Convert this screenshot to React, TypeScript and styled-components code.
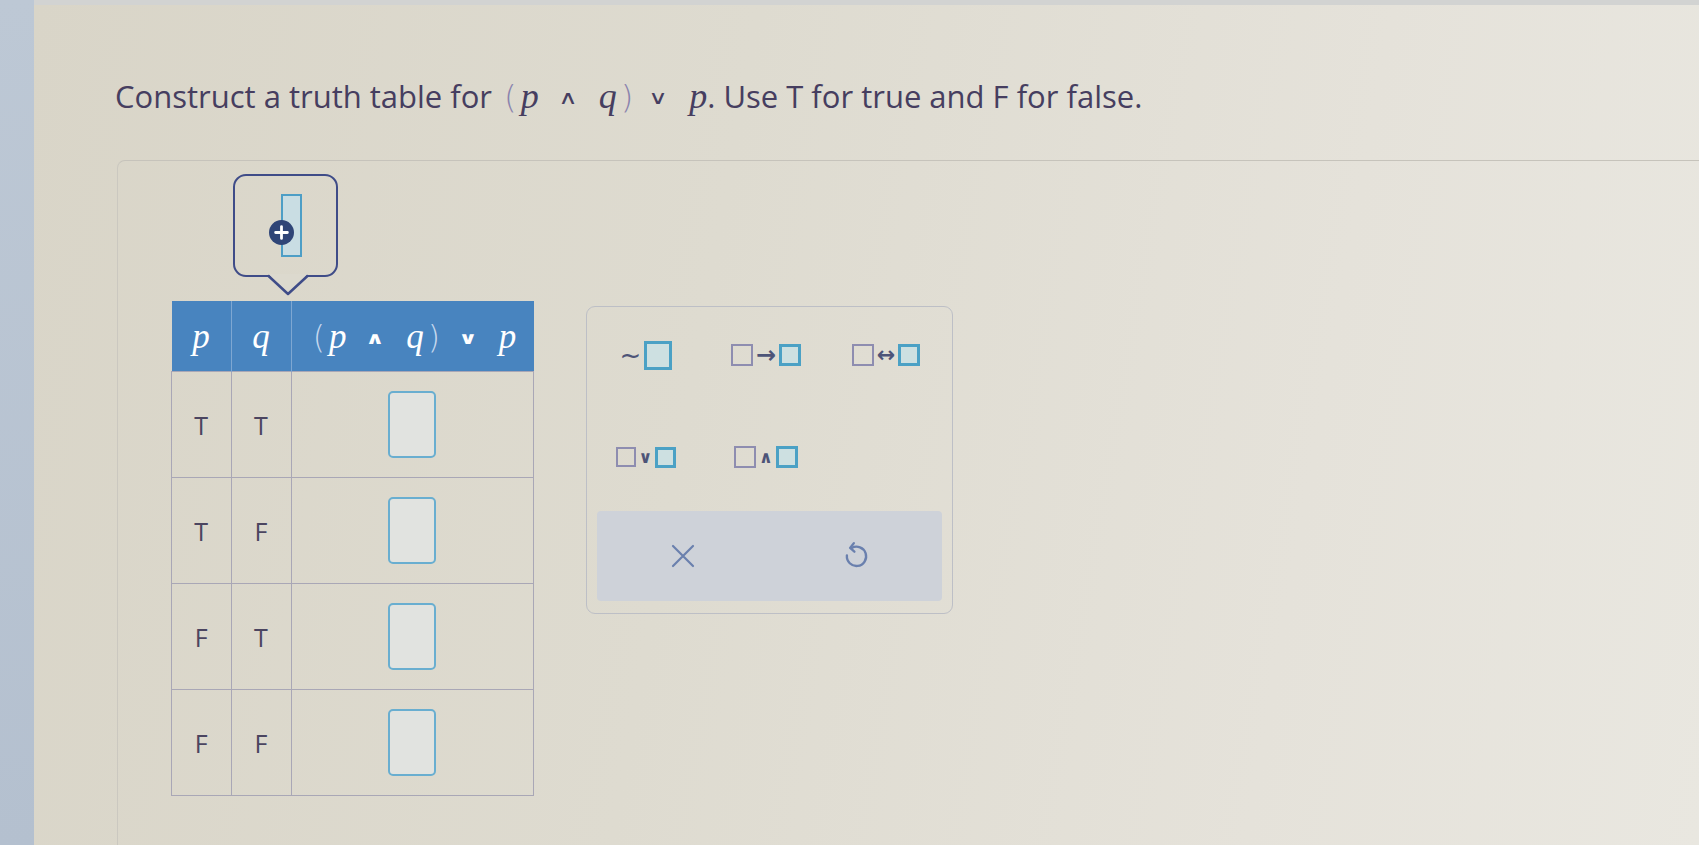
import React from "react";
import styled, { createGlobalStyle } from "styled-components";

const Global = createGlobalStyle`
  html, body { margin: 0; padding: 0; }
  body {
    width: 1699px;
    height: 845px;
    overflow: hidden;
    background: #dedbd1;
    font-family: "Open Sans", "DejaVu Sans", sans-serif;
  }
`;

const Screen = styled.div`
  display: flex;
  width: 1699px;
  height: 845px;
`;

const SideStrip = styled.div`
  flex: none;
  width: 34px;
  background: linear-gradient(180deg, #bdc8d5 0%, #b4c0cf 100%);
`;

const Page = styled.main`
  flex: 1;
  display: flex;
  flex-direction: column;
  border-top: 5px solid #d2d3d2;
  padding: 71px 0 0 81px;
  background: linear-gradient(100deg, #d9d5c8 0%, #dedbd0 40%, #e5e2da 75%, #e9e7e0 100%);
`;

const Prompt = styled.p`
  margin: 0;
  height: 40px;
  font-size: 31px;
  line-height: 40px;
  color: #463e60;
  white-space: nowrap;
`;

const Math = styled.span<{ $header?: boolean }>`
  font-family: "Liberation Serif", "DejaVu Serif", serif;
  font-size: ${(p) => (p.$header ? "35px" : "36px")};
  line-height: 1;
  color: ${(p) => (p.$header ? "#ffffff" : "#463e60")};
  white-space: nowrap;
`;

const Var = styled.i`
  font-style: italic;
`;

const Paren = styled.span<{ $header?: boolean }>`
  font-family: "DejaVu Sans", sans-serif;
  font-weight: 200;
  font-size: 0.9em;
  color: ${(p) => (p.$header ? "#c6d8ee" : "#8a83ad")};
  margin: 0 4px;
`;

const Op = styled.span<{ $l: number; $r: number; $header?: boolean }>`
  display: inline-block;
  font-family: "DejaVu Sans", sans-serif;
  font-size: ${(p) => (p.$header ? 17 : 19)}px;
  font-weight: ${(p) => (p.$header ? 700 : 400)};
  margin: 0 ${(p) => p.$r}px 0 ${(p) => p.$l}px;
  transform: scaleX(1.4);
  position: relative;
  top: -4px;
`;

const Workspace = styled.section`
  margin: 44px 0 0 2px;
  flex: 1;
  border-top: 1.5px solid #c6c3bb;
  border-left: 1.5px solid #cbc8c0;
  border-top-left-radius: 8px;
  padding: 13px 0 0 53px;
`;

const BubbleRow = styled.div`
  display: flex;
  padding-left: 62px;
  height: 127px;
`;

const Bubble = styled.div`
  position: relative;
  width: 105px;
  height: 103px;
  box-sizing: border-box;
  border: 2.5px solid #3f4c88;
  border-radius: 13px;
  display: flex;
  align-items: center;
  justify-content: center;
`;

const Pointer = styled.svg`
  position: absolute;
  left: 32px;
  bottom: -21px;
`;

const SlotGroup = styled.div`
  position: relative;
  padding-left: 12px;
  display: flex;
`;

const TallSlot = styled.div`
  width: 21px;
  height: 63px;
  box-sizing: border-box;
  border: 2px solid #4d9ec6;
  background: #c9dde3;
`;

const PlusBadge = styled.div`
  position: absolute;
  left: 0;
  top: 26px;
  width: 25px;
  height: 25px;
  border-radius: 50%;
  background: #2f4577;
  display: flex;
  align-items: center;
  justify-content: center;
`;

const WorkRow = styled.div`
  display: flex;
  align-items: flex-start;
  gap: 52px;
`;

const Table = styled.table`
  border-collapse: collapse;
  table-layout: fixed;
  width: 360px;
`;

const HeadCell = styled.th<{ $w: number }>`
  width: ${(p) => p.$w}px;
  height: 70px;
  padding: 0;
  background: #4884bf;
  border-left: 1px solid #7ea7d2;
  font-weight: normal;
  text-align: center;
  &:first-child { border-left: none; }
`;

const Cell = styled.td`
  height: 105px;
  padding: 0;
  border: 1.5px solid #a9a7b6;
  text-align: center;
  vertical-align: middle;
  font-size: 25px;
  color: #4b4560;
`;

const AnswerBox = styled.div`
  width: 48px;
  height: 67px;
  margin: 0 auto;
  box-sizing: border-box;
  border: 2.5px solid #69aed0;
  border-radius: 5px;
  background: #e1e3e0;
`;

const Keypad = styled.div`
  margin-top: 5px;
  width: 367px;
  height: 308px;
  box-sizing: border-box;
  border: 1.5px solid #bdbfc6;
  border-radius: 9px;
  padding: 0 10px;
  display: flex;
  flex-direction: column;
`;

const KeyGrid = styled.div`
  display: grid;
  grid-template-columns: repeat(3, 120px);
  grid-auto-rows: 102px;
  margin: -3px 0 0 -11px;
`;

const Key = styled.button`
  border: none;
  background: transparent;
  padding: 0;
  display: flex;
  align-items: center;
  justify-content: center;
  gap: 3px;
  font-family: "DejaVu Sans", sans-serif;
  color: #4a5070;
`;

const Slot = styled.span<{ $teal?: boolean; $size: number; $h?: number }>`
  display: inline-block;
  box-sizing: border-box;
  width: ${(p) => p.$size}px;
  height: ${(p) => p.$h ?? p.$size}px;
  border: ${(p) => (p.$teal ? "3px solid #4ba1c5" : "2.5px solid #8e8db0")};
  background: ${(p) => (p.$teal ? "#cde0e1" : "transparent")};
`;

const KeyOp = styled.span<{ $size?: number; $bold?: boolean }>`
  font-size: ${(p) => p.$size ?? 18}px;
  font-weight: ${(p) => (p.$bold ? 700 : 400)};
  line-height: 1;
  color: #4d5478;
`;

const ActionBar = styled.div`
  margin-top: 3px;
  height: 90px;
  border-radius: 4px;
  background: #ced2d9;
  display: flex;
`;

const ActionButton = styled.button`
  flex: 1;
  border: none;
  background: transparent;
  display: flex;
  align-items: center;
  justify-content: center;
  padding: 0;
`;

const rows: [string, string][] = [
  ["T", "T"],
  ["T", "F"],
  ["F", "T"],
  ["F", "F"],
];

function Expr({ header }: { header?: boolean }) {
  return (
    <Math $header={header}>
      <Paren $header={header}>(</Paren>
      <Var>p</Var>
      <Op $header={header} $l={header ? 22 : 22} $r={header ? 24 : 24}>∧</Op>
      <Var>q</Var>
      <Paren $header={header}>)</Paren>
      <Op $header={header} $l={header ? 17 : 14} $r={header ? 24 : 24}>∨</Op>
      <Var>p</Var>
    </Math>
  );
}

export default function App() {
  return (
    <>
      <Global />
      <Screen>
        <SideStrip />
        <Page>
          <Prompt>
            Construct a truth table for <Expr />. Use T for true and F for false.
          </Prompt>
          <Workspace>
            <BubbleRow>
              <Bubble>
                <SlotGroup>
                  <TallSlot />
                  <PlusBadge>
                    <svg width="15" height="15" viewBox="0 0 14 14">
                      <path d="M7 1.5v11M1.5 7h11" stroke="#ffffff" strokeWidth="2.6" strokeLinecap="round" />
                    </svg>
                  </PlusBadge>
                </SlotGroup>
                <Pointer width="42" height="22" viewBox="0 0 42 22">
                  <polygon points="1,0 21,20 41,0" fill="#dcd9ce" />
                  <polyline points="1,1.5 21,20 41,1.5" fill="none" stroke="#3f4c88" strokeWidth="2.5" strokeLinejoin="round" />
                </Pointer>
              </Bubble>
            </BubbleRow>
            <WorkRow>
              <Table>
                <thead>
                  <tr>
                    <HeadCell $w={59}>
                      <Math $header><Var>p</Var></Math>
                    </HeadCell>
                    <HeadCell $w={59}>
                      <Math $header><Var>q</Var></Math>
                    </HeadCell>
                    <HeadCell $w={242}>
                      <Expr header />
                    </HeadCell>
                  </tr>
                </thead>
                <tbody>
                  {rows.map(([p, q], i) => (
                    <tr key={i}>
                      <Cell>{p}</Cell>
                      <Cell>{q}</Cell>
                      <Cell>
                        <AnswerBox />
                      </Cell>
                    </tr>
                  ))}
                </tbody>
              </Table>
              <Keypad>
                <KeyGrid>
                  <Key>
                    <KeyOp $size={26}>~</KeyOp>
                    <Slot $teal $size={28} $h={29} />
                  </Key>
                  <Key>
                    <Slot $size={22} />
                    <KeyOp $size={24} $bold>→</KeyOp>
                    <Slot $teal $size={22} />
                  </Key>
                  <Key>
                    <Slot $size={22} />
                    <KeyOp $size={22} $bold>↔</KeyOp>
                    <Slot $teal $size={22} />
                  </Key>
                  <Key>
                    <Slot $size={20} />
                    <KeyOp $size={17} $bold>∨</KeyOp>
                    <Slot $teal $size={21} />
                  </Key>
                  <Key>
                    <Slot $size={22} />
                    <KeyOp $size={17} $bold>∧</KeyOp>
                    <Slot $teal $size={22} />
                  </Key>
                </KeyGrid>
                <ActionBar>
                  <ActionButton aria-label="clear">
                    <svg width="26" height="26" viewBox="0 0 26 26">
                      <path d="M3 3L23 23M23 3L3 23" stroke="#6a80ae" strokeWidth="2.2" strokeLinecap="round" />
                    </svg>
                  </ActionButton>
                  <ActionButton aria-label="undo">
                    <svg width="28" height="30" viewBox="0 0 26 28">
                      <path d="M9 6.5A9 9 0 1 1 4.5 13.5" fill="none" stroke="#6a80ae" strokeWidth="2.2" strokeLinecap="round" />
                      <path d="M11 2L7.5 6.5L11.5 10" fill="none" stroke="#6a80ae" strokeWidth="2.2" strokeLinecap="round" strokeLinejoin="round" />
                    </svg>
                  </ActionButton>
                </ActionBar>
              </Keypad>
            </WorkRow>
          </Workspace>
        </Page>
      </Screen>
    </>
  );
}
